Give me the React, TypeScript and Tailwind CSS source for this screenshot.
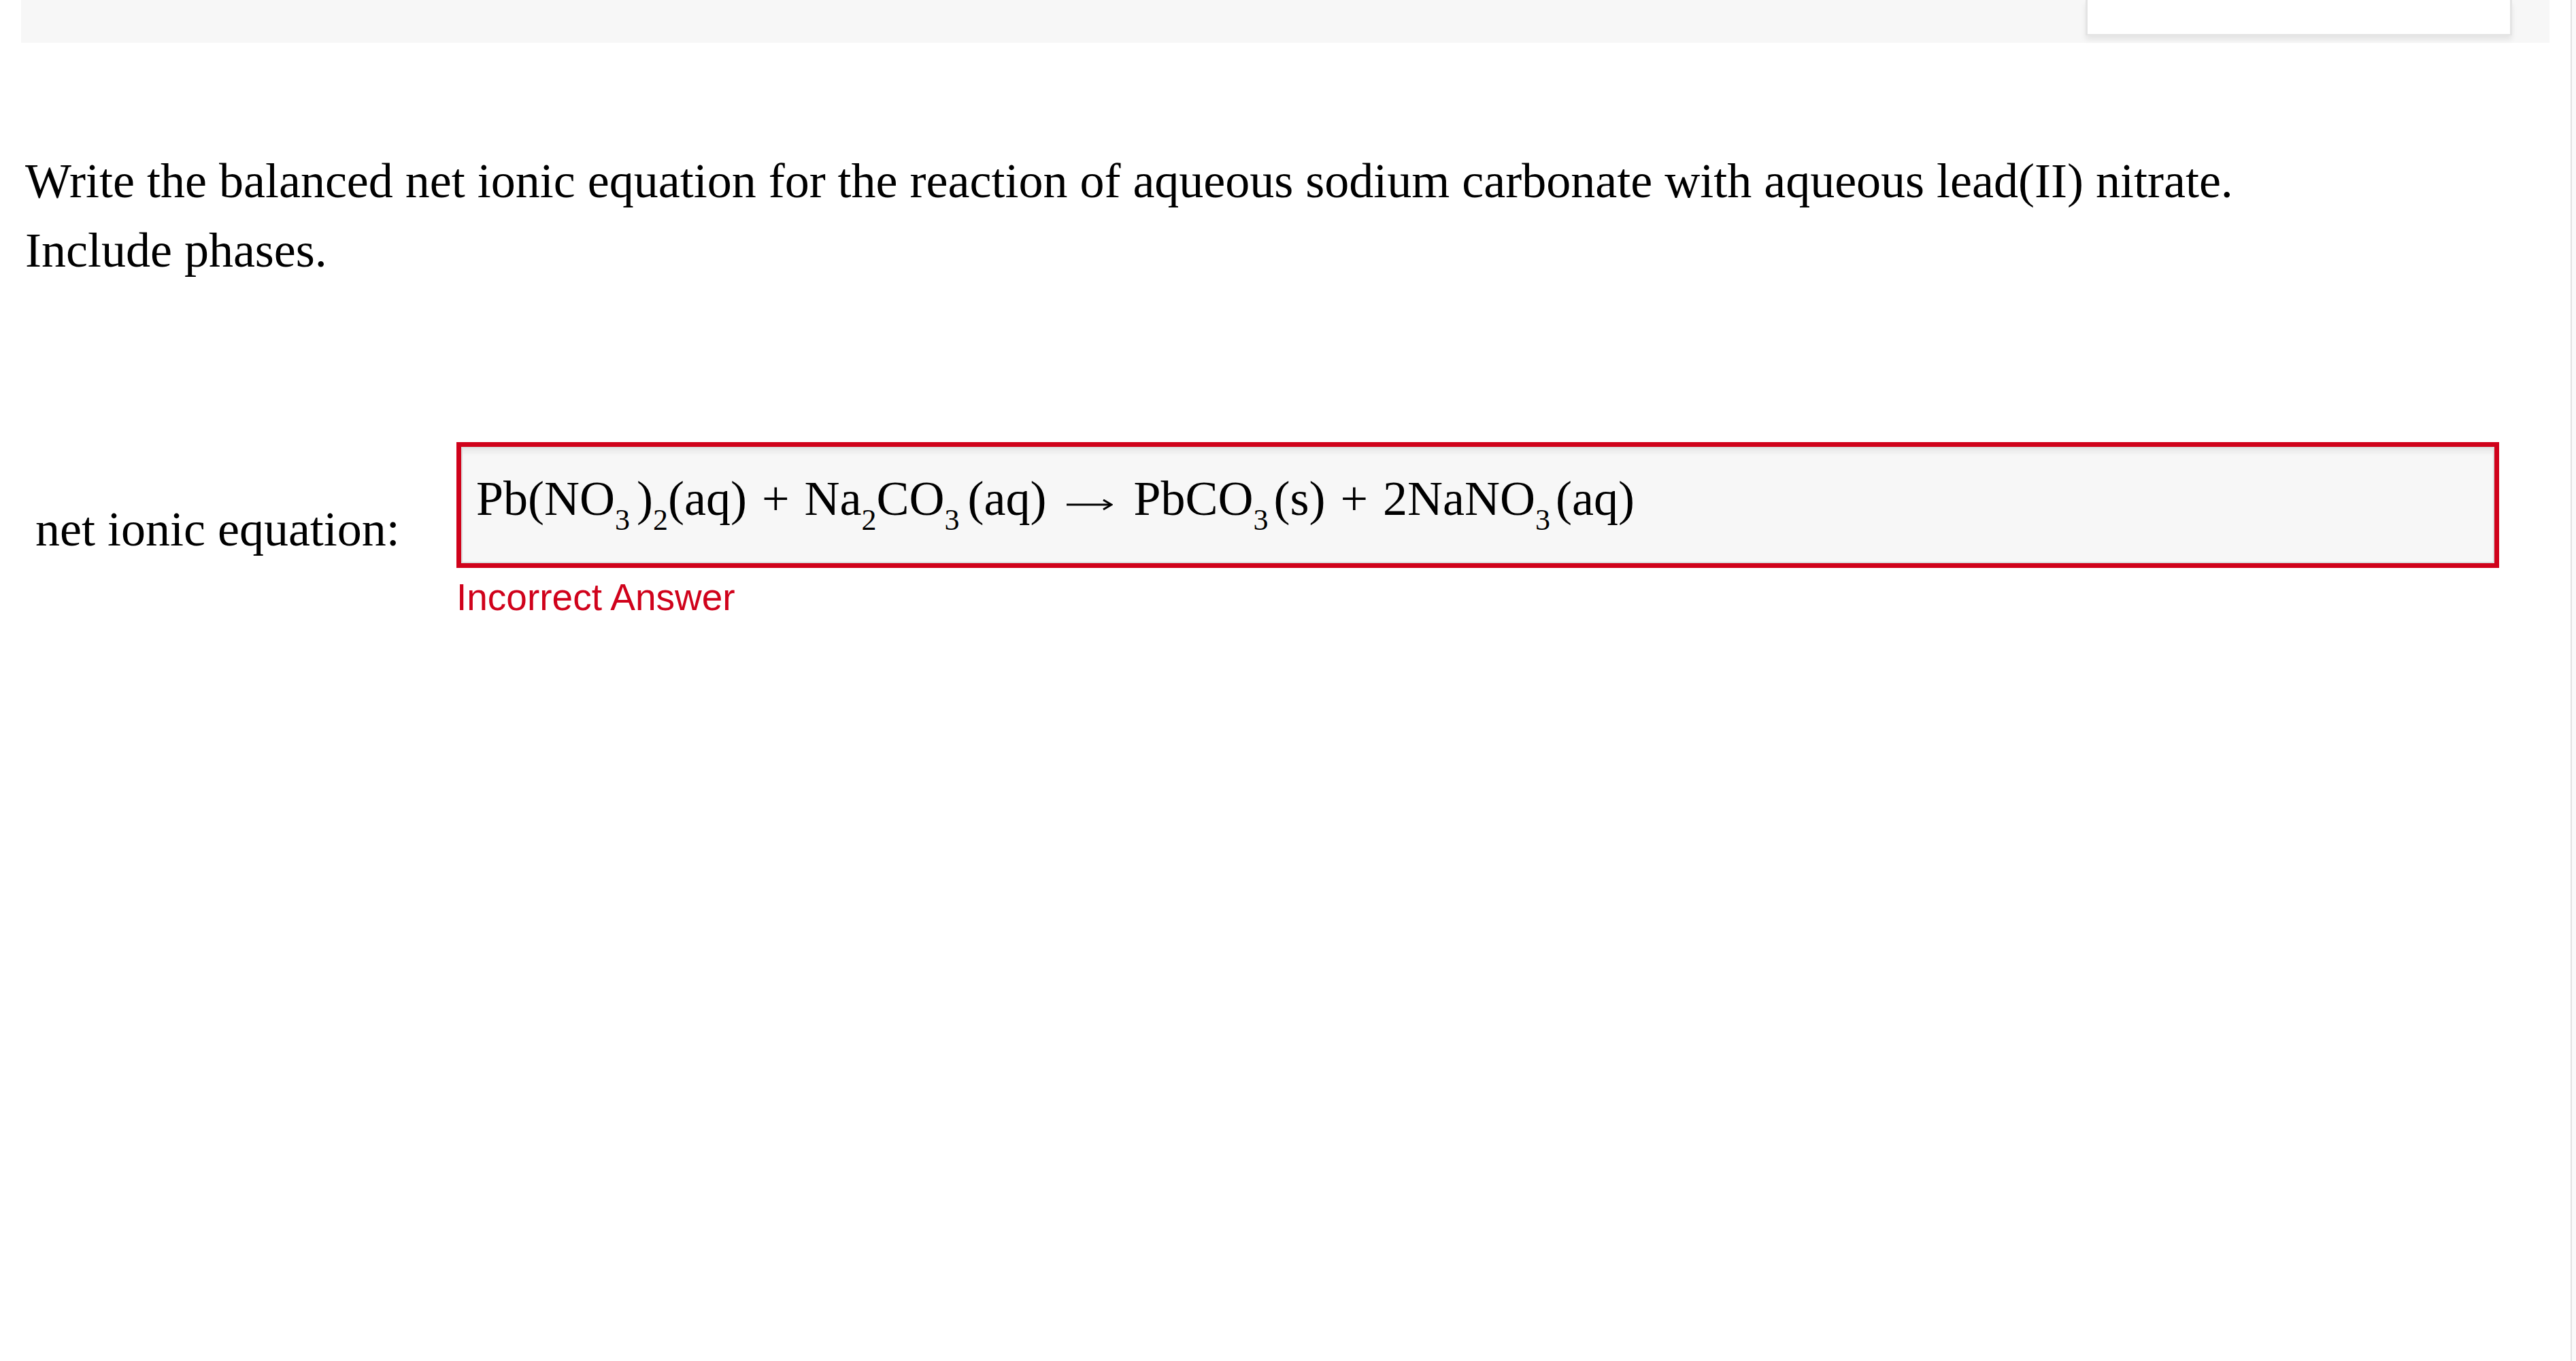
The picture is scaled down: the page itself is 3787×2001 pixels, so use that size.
import React from "react";

const serif = { fontFamily: '"Liberation Serif", "Times New Roman", serif' };

function Sub({ children, gap = "" }: { children: React.ReactNode; gap?: string }) {
  return <span className={`relative top-[22px] text-[44px] ${gap}`}>{children}</span>;
}

function Plus() {
  return <span className="px-[22px]">+</span>;
}

function Arrow() {
  return (
    <svg className="relative top-[2px] mx-[30px] inline-block h-[20px] w-[68px]" viewBox="0 0 68 20" fill="none">
      <path d="M0 10H64" stroke="#000" strokeWidth="3" />
      <path d="M54 3L66 10L54 17" stroke="#000" strokeWidth="3" strokeLinejoin="miter" />
    </svg>
  );
}

function Equation() {
  return (
    <div className="whitespace-nowrap text-[72px] leading-none text-black" style={serif}>
      Pb(NO<Sub gap="mr-[10px]">3</Sub>)<Sub>2</Sub>(aq)<Plus />Na<Sub>2</Sub>CO<Sub gap="mr-[12px]">3</Sub>(aq)
      <Arrow />
      PbCO<Sub gap="mr-[8px]">3</Sub>(s)<Plus />2NaNO<Sub gap="mr-[8px]">3</Sub>(aq)
    </div>
  );
}

export default function App() {
  return (
    <div className="flex min-h-screen w-full bg-white">
      <div className="flex-1">
        {/* toolbar strip at the top */}
        <div className="mx-[31px] flex h-[63px] justify-end bg-[#f7f7f7]">
          <div className="mr-[55px] h-[52px] w-[627px] border-x-[3px] border-b-[2px] border-[#e4e4e4] bg-white shadow-[0_6px_8px_rgba(0,0,0,0.08)]" />
        </div>

        <div className="pl-[37px] pt-[152px] text-[72px] leading-[102px] text-black" style={serif}>
          <p>Write the balanced net ionic equation for the reaction of aqueous sodium carbonate with aqueous lead(II) nitrate.</p>
          <p>Include phases.</p>
        </div>

        <div className="mt-[231px] flex items-start pl-[52px]">
          <div className="w-[619px] shrink-0 pt-[77px] text-[72px] leading-[102px] text-black" style={serif}>
            net ionic equation:
          </div>
          <div className="flex w-[3003px] flex-col">
            <div className="h-[185px] border-[7px] border-[#d0021b]">
              <div className="h-full border-[2px] border-[#dcdcdc] bg-[#f7f7f7] pl-[20px] pt-[38px] shadow-[inset_0_12px_6px_-6px_#e9e9e9]">
                <Equation />
              </div>
            </div>
            <div
              className="mt-[10px] text-[55px] leading-[66px] text-[#d0021b]"
              style={{ fontFamily: '"Liberation Sans", Arial, Helvetica, sans-serif' }}
            >
              Incorrect Answer
            </div>
          </div>
        </div>
      </div>
      <div className="w-[8px] shrink-0 border-l-[2px] border-[#e2e2e2] bg-[#fafafa]" />
    </div>
  );
}
